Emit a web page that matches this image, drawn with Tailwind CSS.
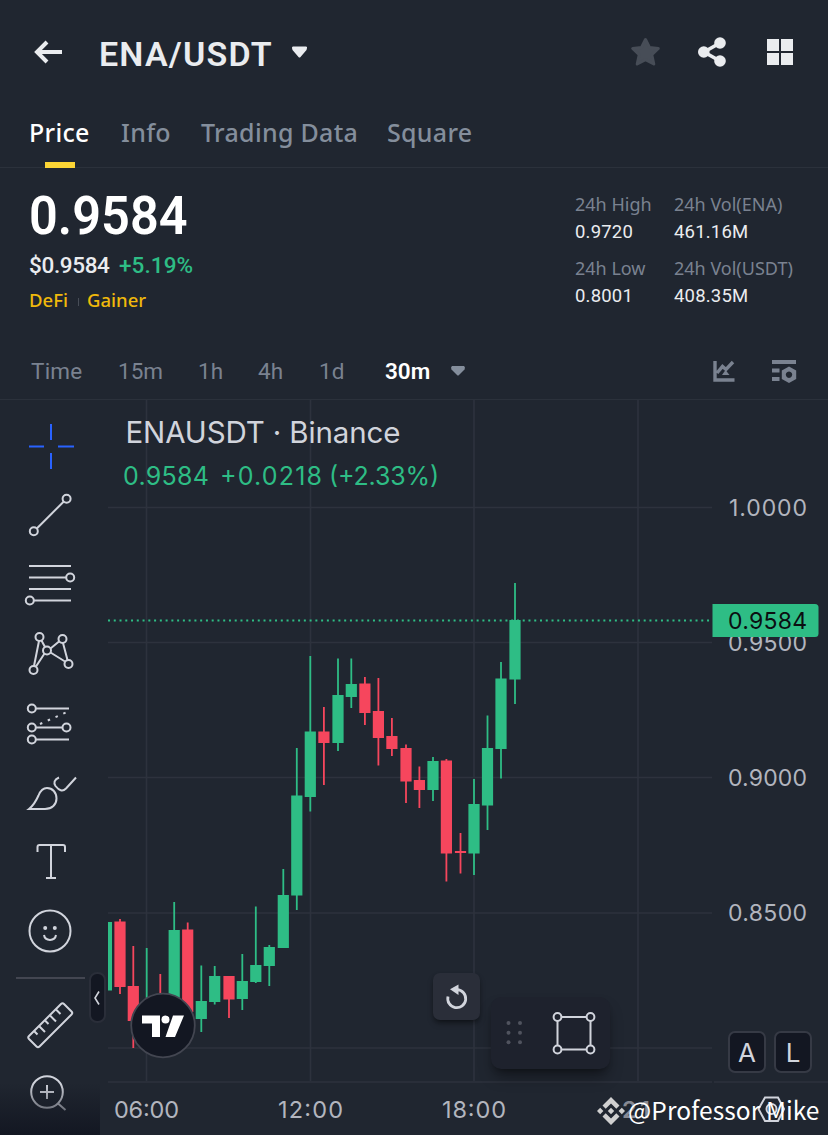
<!DOCTYPE html>
<html lang="en">
<head>
  <meta charset="UTF-8" />
  <meta name="viewport" content="width=device-width, initial-scale=1.0"/>
  <title>ENA/USDT</title>
  <script src="https://cdn.jsdelivr.net/npm/@tailwindcss/browser@4"></script>
</head>
<body class="w-[828px] h-[1135px] overflow-hidden bg-[#202630] text-[#eaecef] font-['Noto_Sans',sans-serif]">

<!-- Header -->
<header class="h-[168px] border-b border-[#2b313b] px-[30px]">
  <div class="h-[104px] flex items-center">
    <svg class="w-[32px] h-[26px]" viewBox="0 0 32 26" fill="none" stroke="#eaecef" stroke-width="4">
      <path d="M33 13H7M17 3 7 13l10 10"/>
    </svg>
    <h1 class="ml-[37px] w-[176px] mt-[3px] text-[34px] leading-none font-semibold tracking-[1.2px] font-[Roboto,sans-serif] whitespace-nowrap">ENA/USDT</h1>
    <svg class="ml-[16px] w-[17px] h-[12px]" viewBox="0 0 17 12" fill="#eaecef"><path d="M2 .5h13q1.500 0 1 1.500L15.500 4 9.500 11q-1 1-2 0L1.500 4 1 2Q.8.5 2 .5z"/></svg>
    <div class="ml-auto flex items-center gap-[37px] pr-[4px]">
      <svg class="w-[31px] h-[30px]" viewBox="0 0 31 30" fill="#474d57" stroke="#474d57" stroke-width="3" stroke-linejoin="round">
        <path d="m15.500 2.500 4 8 8.800 1-6.500 6.200 2 9.300-8.300-4.300-8.300 4.300 2-9.300L2.700 11.500l8.800-1z"/>
      </svg>
      <svg class="w-[30px] h-[30px] -ml-px" viewBox="0 0 30 30" fill="#eaecef">
        <path d="M23 6 7 15l16 9" fill="none" stroke="#eaecef" stroke-width="3.600"/>
        <circle cx="23" cy="6" r="5.800"/><circle cx="6.800" cy="15" r="5.800"/><circle cx="23" cy="24" r="5.800"/>
      </svg>
      <svg class="w-[28px] h-[28px] ml-[2px]" viewBox="0 0 28 28" fill="#eaecef">
        <path d="M1 1h12v12H1zM15 1h12v12H15zM1 15h12v12H1zM15 15h12v12H15z"/>
      </svg>
    </div>
  </div>
  <nav class="h-[64px] -ml-px flex text-[25px] leading-[56px] font-medium tracking-[0.300px] text-[#848e9c] whitespace-nowrap">
    <a href="#" class="w-[92px] text-white relative">Price
      <span class="absolute left-[16px] top-[58px] w-[30px] h-[6px] bg-[#fcd535]"></span>
    </a>
    <a href="#" class="w-[80px]">Info</a>
    <a href="#" class="w-[186px]">Trading Data</a>
    <a href="#">Square</a>
  </nav>
</header>

<!-- Price summary -->
<section class="h-[177px] px-[30px] flex justify-between whitespace-nowrap">
  <div class="pt-[22px] -ml-px">
    <p class="w-[170px] origin-left scale-x-[0.935] text-[54px] leading-[52px] font-semibold text-white font-[Roboto,sans-serif]">0.9584</p>
    <p class="mt-[11px] text-[22.5px] leading-[24px] font-medium font-[Roboto,sans-serif] flex">
      <span class="w-[90px] tracking-[-0.350px]">$0.9584</span><span class="text-[#2ebd85] tracking-[0.100px]">+5.19%</span>
    </p>
    <p class="mt-[10px] text-[18.5px] leading-[26px] font-medium text-[#f0b90b] flex items-center">
      <span class="w-[49px]">DeFi</span><span class="w-px h-[8px] mt-[3px] mr-[8px] bg-[#474d57]"></span><span>Gainer</span>
    </p>
  </div>
  <dl class="w-[223px] pt-[23px] grid grid-cols-[99px_1fr] content-start">
    <div class="h-[64px]"><dt class="text-[18px] leading-[26px] text-[#7a8290]">24h High</dt><dd class="pt-px text-[18.5px] leading-[28px] tracking-[0.200px] font-[Roboto,sans-serif]">0.9720</dd></div>
    <div class="h-[64px]"><dt class="text-[18px] leading-[26px] text-[#7a8290]">24h Vol(ENA)</dt><dd class="pt-px text-[18.5px] leading-[28px] tracking-[0.200px] font-[Roboto,sans-serif]">461.16M</dd></div>
    <div class="h-[64px]"><dt class="text-[18px] leading-[26px] text-[#7a8290]">24h Low</dt><dd class="pt-px text-[18.5px] leading-[28px] tracking-[0.200px] font-[Roboto,sans-serif]">0.8001</dd></div>
    <div class="h-[64px]"><dt class="text-[18px] leading-[26px] text-[#7a8290]">24h Vol(USDT)</dt><dd class="pt-px text-[18.5px] leading-[28px] tracking-[0.200px] font-[Roboto,sans-serif]">408.35M</dd></div>
  </dl>
</section>

<!-- Intervals -->
<div class="h-[55px] pl-[31px] pr-[31px] border-b border-[#2b313b] flex items-center text-[22.5px] text-[#7a8290] font-[Roboto,sans-serif] whitespace-nowrap">
  <span class="w-[87px] tracking-[0.200px]">Time</span>
  <span class="w-[80px]">15m</span>
  <span class="w-[60px]">1h</span>
  <span class="w-[61px]">4h</span>
  <span class="w-[66px]">1d</span>
  <span class="w-[66px] font-semibold text-white">30m</span>
  <svg class="w-[14px] h-[10px] -mt-[2px]" viewBox="0 0 14 10" fill="#848e9c"><path d="M1 0h12l1 1.500-.5 2L8 9Q7 10 6 9L.5 3.500 0 1.500z"/></svg>
  <svg class="ml-auto -mt-[2px] w-[22px] h-[22px]" viewBox="0 0 22 22" fill="none" stroke="#7a8290" stroke-width="3.400">
    <path d="M2 1v19h19.500M4 13l5.500-6.500 3.500 3 7-7.500"/><path d="m12.500 10-3.500 5h7.500z" fill="#7a8290" stroke="none"/>
  </svg>
  <svg class="ml-[37px] w-[25px] h-[24px]" viewBox="0 0 25 24" fill="#7a8290">
    <path d="M0 0h24v4H0zM0 8.500h7.500v4H0zM0 17h7.500v4H0z"/>
    <path fill-rule="evenodd" d="m17 6.500 7.200 4V19L17 23l-7.200-4v-8.500zM17 11.500a3.200 3.200 0 1 0 .01 0z"/>
  </svg>
</div>

<!-- Chart -->
<main class="relative h-[735px] flex">

  <!-- Drawing tools -->
  <aside class="relative w-[100px] shrink-0 pt-[12px] flex flex-col">
    <svg class="w-[100px] h-[69px]" viewBox="0 0 100 69" stroke="#2962ff" stroke-width="2"><path d="M51 12v16M51 41v16M29 34.500h15M58 34.500h16"/></svg>
    <svg class="w-[100px] h-[69px]" viewBox="0 0 100 69" fill="none" stroke="#d1d4dc" stroke-width="2">
      <path d="m36.800 47.500 27-27"/><circle cx="66.600" cy="17.700" r="4"/><circle cx="33.800" cy="50.300" r="4"/>
    </svg>
    <svg class="w-[100px] h-[69px]" viewBox="0 0 100 69" fill="none" stroke="#d1d4dc" stroke-width="2">
      <path d="M29 16h42M29 27.500h37M29 39h42M34 50.500h37"/><circle cx="70.200" cy="27.500" r="4"/><circle cx="29.800" cy="50.500" r="4"/>
    </svg>
    <svg class="w-[100px] h-[69px]" viewBox="0 0 100 69" fill="none" stroke="#d1d4dc" stroke-width="2">
      <path d="m39 22-5 25M41.500 21.500l3.500 6.500M44.500 34.500 36 47.500M50.500 29.500 59 22.500M63 24l4.500 17M50.500 33.500l14.500 9"/>
      <circle cx="39.500" cy="18" r="4"/><circle cx="62.500" cy="20" r="4"/><circle cx="47" cy="31.500" r="4"/><circle cx="33.500" cy="51" r="4"/><circle cx="68.500" cy="45" r="4"/>
    </svg>
    <svg class="w-[100px] h-[69px]" viewBox="0 0 100 69" fill="none" stroke="#d1d4dc" stroke-width="2">
      <path d="M36 20.500h33M36 39.500h26M36 51.500h33"/><path d="m40 36 28-12.500" stroke-dasharray="2.500 6"/>
      <circle cx="31.800" cy="20.500" r="4"/><circle cx="31.800" cy="39.500" r="4"/><circle cx="66.500" cy="39.500" r="4"/><circle cx="31.800" cy="51.500" r="4"/>
    </svg>
    <svg class="w-[100px] h-[69px]" viewBox="0 0 100 69" fill="none" stroke="#d1d4dc" stroke-width="2">
      <path d="M29 52c5-4 7.500-9 9.500-13.500C40.500 33.500 43 31 47 31c5.500 0 9.500 4.500 9.500 10.500S52 52 45 52z"/>
      <path d="M59 20.500c-5 2-5.500 5.500-3.500 8.500 3.500 4.500 7 6 10.500 2.500l10-11"/>
    </svg>
    <svg class="w-[100px] h-[69px]" viewBox="0 0 100 69" fill="none" stroke="#d1d4dc" stroke-width="2">
      <path d="M37.500 26v-5q0-2 2-2h23.500q2 0 2 2v5M51 19v32.500M46 52h10"/>
    </svg>
    <svg class="w-[100px] h-[69px]" viewBox="0 0 100 69" fill="none" stroke="#d1d4dc" stroke-width="2">
      <circle cx="50" cy="36" r="20.500"/><path d="M44 40c1 6.500 11 6.500 12 0"/>
      <circle cx="45.200" cy="33" r="2" fill="#d1d4dc" stroke="none"/><circle cx="54.800" cy="33" r="2" fill="#d1d4dc" stroke="none"/>
    </svg>
    <div class="h-[27px] pl-[16px] pr-[15px] flex items-center"><div class="w-full h-[2px] bg-[#434651]"></div></div>
    <svg class="w-[100px] h-[69px]" viewBox="0 0 100 69" fill="none" stroke="#d1d4dc" stroke-width="2">
      <path d="M61 13q1.500-1.500 3 0l7.500 7.500q1.500 1.500 0 3L39.500 55.500q-1.500 1.500-3 0L29 48q-1.500-1.500 0-3z"/>
      <path d="m34 40 3.500 3.500M39 35l6 6M45 29.500l3.500 3.500M50 24.500l6 6M56 18.500l4.500 4.500"/>
    </svg>
    <svg class="w-[100px] h-[69px]" viewBox="0 0 100 69" fill="none" stroke="#d1d4dc" stroke-width="2">
      <circle cx="47" cy="32" r="15.800"/><path d="M47 25v14M40 32h14M58 43.500l7.500 6.500"/>
    </svg>
    <div class="absolute left-0 bottom-0 w-[100px] h-[52px] bg-gradient-to-b from-[#131722]/0 to-[#131722]"></div>
  </aside>

  <svg class="w-[728px] h-[735px] shrink-0" viewBox="100 400 728 735" font-family="Inter, sans-serif">
    <!-- grid -->
    <path d="M146.500 400v681M310.500 400v681M474 400v681M638 400v681M108 507.500h604M108 642.500h604M108 777.500h604M108 913h604M108 1048h604M108 1082h604M714 1082h114" stroke="#2d323d" stroke-width="1.700"/>
    <g id="candles"></g>
    <path d="M108 620.500H712" stroke="#2ebd85" stroke-width="2" stroke-dasharray="2 3.760"/>

    <!-- legend -->
    <text x="125.500" y="443" font-size="29.500" fill="#d1d4dc" textLength="275">ENAUSDT · Binance</text>
    <g font-size="25" fill="#2ebd85">
      <text x="123" y="484.500" textLength="86">0.9584</text>
      <text x="220" y="484.500" textLength="102">+0.0218</text>
      <text x="329" y="484.500" textLength="110">(+2.33%)</text>
    </g>

    <!-- price scale -->
    <g font-size="23" fill="#b2b5be">
      <text x="729" y="516" textLength="78">1.0000</text>
      <text x="728" y="651" textLength="79">0.9500</text>
      <text x="728" y="786" textLength="79">0.9000</text>
      <text x="728" y="921" textLength="79">0.8500</text>
    </g>
    <path d="M712.500 604h102.500q3.500 0 3.500 3.500v26q0 3.500-3.500 3.500H712.500z" fill="#2ebd85"/>
    <text x="728" y="628.500" font-size="23" fill="#0b0e11" textLength="79">0.9584</text>

    <!-- time scale -->
    <g font-size="23.500" fill="#b2b5be">
      <text x="114" y="1118" textLength="65">06:00</text>
      <text x="278" y="1118" textLength="65">12:00</text>
      <text x="442" y="1118" textLength="64">18:00</text>
      <text x="622" y="1118" font-weight="600" fill="#868993" textLength="28">21</text>
    </g>
    <g fill="none" stroke="#d1d4dc" stroke-width="2">
      <path d="M765 1097.500h13l6 11.500-6 12h-13l-6.500-12z"/><circle cx="771.500" cy="1109" r="5"/>
    </g>

    <!-- TradingView badge -->
    <circle cx="163" cy="1025.500" r="31.800" fill="#131722" stroke="#434651" stroke-width="1.800"/>
    <path d="M142 1015.500h18v21.500h-8v-13.500h-10zM173 1015.500h11l-9 21.500h-9.500z" fill="#fff"/><circle cx="165.500" cy="1019.500" r="4" fill="#fff"/>
  </svg>

  <!-- Toolbar collapse handle -->
  <button class="absolute left-[89px] top-[572px] w-[17px] h-[51px] rounded-[8px] border-2 border-[#2a2e39] bg-[#131722] flex items-center justify-center pr-px">
    <svg class="w-[6px] h-[14px]" viewBox="0 0 6 14" fill="none" stroke="#d1d4dc" stroke-width="1.600"><path d="M5 .5 1 7l4 6.500"/></svg>
  </button>

  <!-- Reset chart -->
  <button class="absolute left-[433px] top-[573px] w-[47px] h-[47px] rounded-[7px] bg-[#2a2e39] shadow-md shadow-black/40 flex items-center justify-center">
    <svg class="w-[24px] h-[26px]" viewBox="0 0 24 26" fill="none" stroke="#d1d4dc" stroke-width="2.800">
      <path d="M3 12.500A9 9 0 1 0 12 5.700"/><path d="M5 5.300 13.500.5v10.500z" fill="#d1d4dc" stroke="none"/>
    </svg>
  </button>

  <!-- Favorite tools -->
  <div class="absolute left-[491px] top-[597px] w-[119px] h-[72px] rounded-[10px] bg-[#1e222d] shadow-lg shadow-black/40 flex items-center pl-[14px]">
    <svg class="w-[20px] h-[26px]" viewBox="0 0 20 26" fill="#50535e">
      <circle cx="3.500" cy="3" r="2"/><circle cx="15" cy="3" r="2"/><circle cx="3.500" cy="12.700" r="2"/><circle cx="15" cy="12.700" r="2"/><circle cx="3.500" cy="22.300" r="2"/><circle cx="15" cy="22.300" r="2"/>
    </svg>
    <svg class="ml-[27px] -mt-px w-[44px] h-[44px]" viewBox="0 0 44 44" fill="none" stroke="#d1d4dc" stroke-width="2">
      <path d="M10 6h24M10 38.500h24M5.500 10v24M38.500 10v24"/>
      <circle cx="5.500" cy="6" r="3.900"/><circle cx="38.500" cy="6" r="3.900"/><circle cx="5.500" cy="38.500" r="3.900"/><circle cx="38.500" cy="38.500" r="3.900"/>
    </svg>
  </div>

  <!-- Auto / log scale -->
  <div class="absolute left-[728px] top-[631px] flex gap-[8px] font-[Inter,sans-serif] text-[26px] text-[#d1d4dc]">
    <button class="w-[38px] h-[42px] rounded-[7px] border-2 border-[#363a45] bg-[#131722]">A</button>
    <button class="w-[38px] h-[42px] rounded-[7px] border-2 border-[#363a45] bg-[#131722]">L</button>
  </div>

  <!-- Author tag -->
  <div class="absolute left-[597px] top-[697px] flex items-center whitespace-nowrap">
    <svg class="w-[28px] h-[28px]" viewBox="0 0 28 28" fill="#d0d0d0">
      <path d="m14 0 8.500 8.500-3.200 3.200L14 6.400l-5.300 5.300-3.200-3.200zM14 28l8.500-8.500-3.200-3.200-5.300 5.300-5.300-5.300-3.200 3.200zM14 10.800l3.200 3.200-3.200 3.200-3.200-3.200zM3.200 10.800 6.400 14l-3.200 3.200L0 14zM24.800 10.800 28 14l-3.200 3.200-3.200-3.200z"/>
    </svg>
    <span class="ml-[3px] -mt-[2px] text-[24.5px] leading-[28px] tracking-[0.100px] text-white font-normal font-['Noto_Sans_CJK_SC',sans-serif]">@Professor Mike</span>
  </div>
</main>

<script>
  // x, open/close top, bottom, high, low, up
  const candles = [
    [120, 921.5, 987, 919, 994, 0], [133.3, 986, 1021, 946, 1048, 0], [146.7, 1008, 1020, 948, 1030, 1],
    [160.3, 1002, 1020, 974, 1030, 0], [174.2, 930, 1012, 902, 1020, 1], [187.7, 929.5, 1012, 922.5, 1015, 0],
    [201.3, 1001, 1019, 965.5, 1032, 1], [214.7, 976, 1002, 966, 1004.5, 1], [229, 976, 999.5, 976, 1018, 0],
    [242.3, 981, 999, 954, 1010, 1], [255.8, 965, 982, 906.5, 983, 1], [269.3, 947, 966, 945, 986, 1],
    [283.3, 895, 948, 869, 948, 1], [296.8, 795.5, 895.5, 748, 910, 1], [310.3, 731.5, 797, 656, 811.5, 1],
    [323.9, 731.5, 743, 707, 785, 0], [338, 695, 743, 658.5, 751, 1], [351.3, 684, 697, 658.5, 708, 1],
    [364.9, 683.5, 713, 677, 725, 0], [378.4, 711, 738, 678, 765.5, 0], [391.9, 736, 749, 718, 756, 0],
    [406, 748, 781.5, 744.5, 803, 0], [419.4, 780, 790, 766.5, 808, 0], [433, 761, 790, 757, 801, 1],
    [446.4, 760.5, 853.5, 759, 881.5, 0], [460.5, 851, 853, 833, 873.5, 0], [474, 804, 853.5, 779, 875, 1],
    [487.5, 748, 805.5, 715.5, 830, 1], [501, 678.5, 749, 662, 778.5, 1], [515, 620, 679.5, 583, 704, 1]
  ];
  let out = '<rect x="108" y="922" width="4" height="68.500" fill="#2ebd85"/>';
  for (const [x, top, bottom, high, low, up] of candles) {
    const color = up ? '#2ebd85' : '#f6465d';
    out += `<rect x="${x - 0.9}" y="${high}" width="1.800" height="${low - high}" fill="${color}"/>`;
    out += `<rect x="${x - 5.6}" y="${top}" width="11.200" height="${bottom - top}" fill="${color}"/>`;
  }
  document.getElementById('candles').innerHTML = out;
</script>
</body>
</html>
